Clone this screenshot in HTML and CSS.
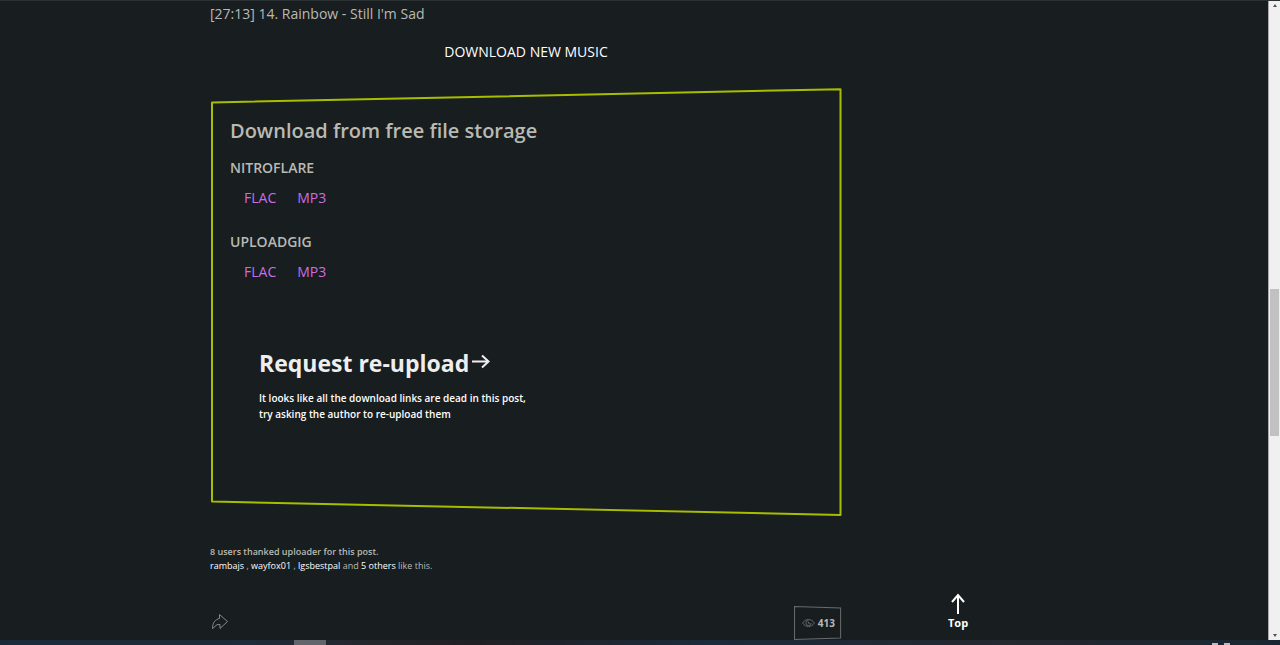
FILE: index.html
```
<!DOCTYPE html>
<html lang="en">
<head>
<meta charset="utf-8">
<meta name="viewport" content="width=device-width, initial-scale=1">
<title>Download new music</title>
<link rel="stylesheet" href="styles.css">
</head>
<body>
<div class="window">
  <main class="page">
    <article class="post">
      <p class="track">[27:13] 14. Rainbow - Still I'm Sad</p>
      <p class="promo"><a href="#new">DOWNLOAD NEW MUSIC</a></p>
      <section class="panel">
        <svg class="panel-frame" viewBox="0 0 632 430" preserveAspectRatio="none" aria-hidden="true"><path d="M2 15.500L630.500 2.200V428L2 414.500Z"/></svg>
        <h2 class="panel-title">Download from free file storage</h2>
        <h3 class="host">NITROFLARE</h3>
        <div class="formats"><a href="#nf-flac">FLAC</a><a href="#nf-mp3">MP3</a></div>
        <h3 class="host">UPLOADGIG</h3>
        <div class="formats"><a href="#ug-flac">FLAC</a><a href="#ug-mp3">MP3</a></div>
        <a class="request" href="#request">
          <span class="request-title">Request re-upload<svg class="request-arrow" viewBox="0 0 20 16" aria-hidden="true"><path d="M1 7.500H17M11 1.500L17.500 7.500L11 13.500"/></svg></span>
          <span class="request-text">It looks like all the download links are dead in this post,<br>try asking the author to re-upload them</span>
        </a>
      </section>
      <div class="thanks">
        <p class="thanks-count">8 users thanked uploader for this post.</p>
        <p><a href="#u1">rambajs</a> , <a href="#u2">wayfox01</a> , <a href="#u3">lgsbestpal</a> and <a href="#others">5 others</a> like this.</p>
      </div>
      <footer class="post-footer">
        <button class="share" type="button" aria-label="Share"><svg viewBox="0 0 18 18" aria-hidden="true"><path d="M8.500 1.500L16.500 8.500L9 15.500V11.500L6 11.700L1.500 15.500C1.500 10 4 6.500 8.500 5.500Z"/></svg></button>
        <div class="views">
          <svg class="views-frame" viewBox="0 0 48 35" preserveAspectRatio="none" aria-hidden="true"><path d="M1.500 1.500L46.500 3V33L1.500 34.500Z"/></svg>
          <svg class="eye" viewBox="0 0 14 10" aria-hidden="true"><path d="M.7 5C3.500 0 10.500 0 13.300 5C10.500 10 3.500 10 .7 5ZM7 2.200A2.800 2.800 0 1 0 9.800 5M7 3.700V5.300H8.500"/></svg>
          <span>413</span>
        </div>
      </footer>
    </article>
    <a class="top" href="#top"><svg viewBox="0 0 14 22" aria-hidden="true"><path d="M7 21V2M1 9L7 2L13 9"/></svg>Top</a>
  </main>
  <div class="scrollbar" aria-hidden="true"><i class="arrow-up"></i><i class="thumb"></i><i class="arrow-down"></i></div>
</div>
<div class="taskbar"><i class="task"></i><i class="clock"></i></div>
</body>
</html>
```

FILE: styles.css
```
* { box-sizing: border-box; }
body, p, h2, h3 { margin: 0; }
body {
  min-height: 100vh;
  display: flex;
  flex-direction: column;
  background: #181d20;
  color: #b8bab3;
  font-family: "Open Sans", "Noto Sans", sans-serif;
  font-size: 14px;
  line-height: 20px;
}
a { color: #fff; text-decoration: none; }
svg { display: block; fill: none; stroke: currentColor; }
.window { flex: 1; display: flex; border-top: 1px solid #2b3033; }
.page {
  flex: 1;
  display: grid;
  grid-template-columns: minmax(0, 632px) auto;
  justify-content: start;
  column-gap: 106px;
  padding: 3px 0 0 210px;
}
.post { display: flex; flex-direction: column; }
.promo { margin-top: 18px; text-align: center; }
.panel {
  position: relative;
  min-height: 430px;
  margin-top: 25px;
  padding: 28px 20px;
}
.panel-frame, .views-frame { position: absolute; inset: 0; width: 100%; height: 100%; }
.panel-frame { stroke: #a8bd00; stroke-width: 2; stroke-linejoin: round; }
.panel-frame path { vector-effect: non-scaling-stroke; }
.panel-title { font-size: 20px; line-height: 32px; font-weight: 600; }
.host { margin-top: 11px; font-size: 14px; line-height: 20px; font-weight: 600; }
.formats {
  position: relative;
  display: flex;
  gap: 21px;
  padding: 10px 14px 13px;
}
.formats a { color: #cb6ce0; }
.panel, .request { display: flex; flex-direction: column; align-items: flex-start; }
.request { position: relative; margin: 50px 0 0 29px; color: #eee; font-weight: 700; }
.request-title { display: flex; gap: 2px; font-size: 23px; line-height: 36px; }
.request-arrow { width: 20px; height: 16px; margin-top: 9px; stroke-width: 2; }
.request-text { margin-top: 9px; font-size: 10px; line-height: 16px; font-weight: 600; color: #fff; }
.thanks { margin-top: 28px; font-size: 9px; line-height: 14px; }
.thanks-count { font-weight: 600; }
.post-footer { display: flex; justify-content: space-between; margin-top: 32px; }
.share { width: 20px; height: 20px; margin-top: 7px; padding: 1px; border: 0; background: none; color: #85888a; }
.share svg { width: 18px; height: 18px; }
.views {
  position: relative;
  display: flex;
  align-items: center;
  gap: 3px;
  height: 35px;
  padding: 0 7px 0 9px;
  font-size: 10px;
  line-height: 14px;
  font-weight: 700;
}
.views-frame, .eye { color: #666b6e; }
.eye { width: 13px; height: 10px; }
.top {
  align-self: end;
  display: flex;
  flex-direction: column;
  align-items: center;
  padding-bottom: 9px;
  font-size: 11px;
  line-height: 16px;
  font-weight: 700;
}
.top svg { width: 14px; height: 22px; stroke-width: 2; }
.scrollbar {
  flex: none;
  width: 12px;
  display: grid;
  grid-template-rows: 9px 279fr 147px 195fr 9px;
  justify-items: center;
  border-left: 1px solid #aaa;
  background: #f0f0f0;
}
.thumb { grid-row: 3; width: 9px; background: #c1c1c1; }
.arrow-up, .arrow-down { align-self: center; border: 2px solid transparent; }
.arrow-up { border-top: 0; border-bottom: 3px solid #505050; }
.arrow-down { grid-row: 5; border-bottom: 0; border-top: 3px solid #505050; }
.taskbar {
  flex: none;
  display: flex;
  justify-content: space-between;
  height: 5px;
  padding: 0 50px 0 294px;
  background: linear-gradient(90deg, #1b2a39, #1e2b38 20%, #24272e 27%, #201f23 37%, #1b2a39 55%, #24272e 80%, #192631);
}
.task { width: 32px; background: #62656b; }
.clock { width: 18px; margin-top: 3px; border-top: 2px dashed #bbb; }
```
